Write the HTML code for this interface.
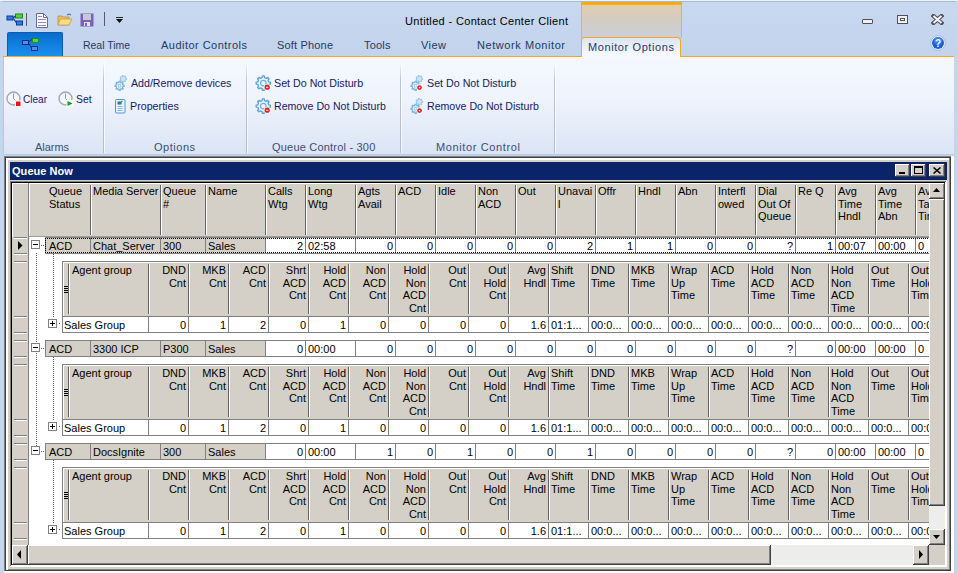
<!DOCTYPE html>
<html><head><meta charset="utf-8"><title>Queue Now</title>
<style>
html,body{margin:0;padding:0}
body{width:958px;height:573px;overflow:hidden;position:relative;font-family:"Liberation Sans",sans-serif;}
.a{position:absolute}
.t{white-space:nowrap}
</style></head><body>
<div class="a" style="left:0px;top:0px;width:958px;height:573px;background:#c4d5ee"></div>
<div class="a" style="left:0px;top:0px;width:958px;height:1px;background:#eef3fb"></div>
<div class="a" style="left:2px;top:1px;width:954px;height:1px;background:#a9bad3"></div>
<div class="a" style="left:0px;top:2px;width:958px;height:54px;background:linear-gradient(#c9d8ef,#c2d3ec)"></div>
<svg class="a" style="left:6px;top:12px" width="18" height="15" viewBox="0 0 18 15">
<rect x="1" y="4" width="6" height="4" fill="#2a7fe0" stroke="#0b3a9a" stroke-width="1"/>
<rect x="9.5" y="2" width="7" height="4" fill="#5ad040" stroke="#1a8a10" stroke-width="1"/>
<rect x="10.5" y="9" width="6" height="4" fill="#2a7fe0" stroke="#0b3a9a" stroke-width="1"/>
<path d="M7 6 L9.5 4 M7.5 6.5 L10.5 11" stroke="#0b3a9a" stroke-width="1.2" fill="none"/>
</svg>
<div class="a" style="left:26px;top:13px;width:1px;height:13px;background:#5a5a6a"></div>
<svg class="a" style="left:35px;top:12px" width="14" height="17" viewBox="0 0 14 17">
<path d="M1.5 1.5 H8.5 L12.5 5.5 V15.5 H1.5 Z" fill="#fff" stroke="#6a6aa0" stroke-width="1"/>
<path d="M8.5 1.5 V5.5 H12.5" fill="none" stroke="#6a6aa0" stroke-width="1"/>
<path d="M3 4.5 H7 M3 7.5 H11 M3 10.5 H11 M3 13.5 H11" stroke="#8c8cc0" stroke-width="1"/>
</svg>
<svg class="a" style="left:57px;top:13px" width="16" height="14" viewBox="0 0 16 14">
<path d="M1 3 H5 L6 4 H12 V12 H1 Z" fill="#e8c060" stroke="#c09030" stroke-width="0.8"/>
<path d="M1 12 L3.5 6 H15 L12 12 Z" fill="#f8dc88" stroke="#c8a040" stroke-width="0.8"/>
<path d="M10 2 Q12 0 14 2" fill="none" stroke="#3060a0" stroke-width="1"/>
</svg>
<svg class="a" style="left:80px;top:13px" width="15" height="15" viewBox="0 0 15 15">
<rect x="0.5" y="0.5" width="13" height="13" fill="#7b62b8"/>
<rect x="3" y="1" width="8" height="6" fill="#c8c8d0"/>
<rect x="4" y="9" width="6" height="4" fill="#e0e0e0"/>
<rect x="5" y="10" width="2" height="3" fill="#7b62b8"/>
</svg>
<div class="a" style="left:104px;top:12px;width:1px;height:14px;background:#5a5a6a"></div>
<div class="a" style="left:116px;top:17px;width:7px;height:1px;background:#222"></div>
<svg class="a" style="left:116px;top:19px" width="8" height="5"><path d="M0 0 H7 L3.5 4 Z" fill="#111"/></svg>
<div class="a t" style="left:405px;top:15px;font-size:11px;line-height:13px;color:#000;letter-spacing:0.348px;">Untitled - Contact Center Client</div>
<div class="a" style="left:862px;top:19px;width:11px;height:5px;background:#f0f0f0;border:1px solid #505058;box-sizing:border-box;border-radius:1px"></div>
<div class="a" style="left:897px;top:15px;width:11px;height:9px;background:#f0f0f0;border:1px solid #505058;box-sizing:border-box"></div>
<div class="a" style="left:900px;top:18px;width:5px;height:3px;background:#fff;border:1px solid #505058;box-sizing:border-box"></div>
<svg class="a" style="left:931px;top:14px" width="13" height="11" viewBox="0 0 13 11">
<path d="M2.5 2 L10.5 9 M10.5 2 L2.5 9" stroke="#505058" stroke-width="4.2" stroke-linecap="square"/>
<path d="M2.5 2 L10.5 9 M10.5 2 L2.5 9" stroke="#f4f4f4" stroke-width="2" stroke-linecap="butt"/>
</svg>
<svg class="a" style="left:930px;top:35px" width="16" height="16" viewBox="0 0 16 16">
<circle cx="8" cy="8" r="7.2" fill="#fff" stroke="#8ab0e8" stroke-width="0.8"/>
<circle cx="8" cy="8" r="6" fill="#1a5fd0"/>
<circle cx="8" cy="6" r="4" fill="#4a90f0" opacity="0.6"/>
<text x="8" y="12" text-anchor="middle" font-family="Liberation Sans" font-weight="bold" font-size="10" fill="#fff">?</text>
</svg>
<div class="a" style="left:7px;top:32px;width:56px;height:24px;background:linear-gradient(#0a6ccc,#1890ee);border:1px solid #0c5cb0;border-bottom:none;box-sizing:border-box;border-radius:2px 2px 0 0"></div>
<svg class="a" style="left:21px;top:37px" width="19" height="15" viewBox="0 0 19 15">
<rect x="1.5" y="3.5" width="6" height="4" fill="#4a90e0" stroke="#0b2a8a" stroke-width="1"/>
<rect x="11.5" y="1.5" width="6" height="4" fill="#60d040" stroke="#1a8a10" stroke-width="0.8"/>
<rect x="10.5" y="9.5" width="6" height="4" fill="#4a90e0" stroke="#0b2a8a" stroke-width="1"/>
<path d="M7.5 5 L11 2.5 M8 6.5 L10.5 11" stroke="#0b2a8a" stroke-width="1" fill="none"/>
</svg>
<div class="a t" style="left:83px;top:39px;font-size:10.44px;line-height:13px;color:#1e3a66;">Real Time</div>
<div class="a t" style="left:161px;top:39px;font-size:11px;line-height:13px;color:#1e3a66;letter-spacing:0.473px;">Auditor Controls</div>
<div class="a t" style="left:277px;top:39px;font-size:11px;line-height:13px;color:#1e3a66;letter-spacing:0.178px;">Soft Phone</div>
<div class="a t" style="left:364px;top:39px;font-size:11px;line-height:13px;color:#1e3a66;letter-spacing:0.200px;">Tools</div>
<div class="a t" style="left:421px;top:39px;font-size:11px;line-height:13px;color:#1e3a66;letter-spacing:0.433px;">View</div>
<div class="a t" style="left:477px;top:39px;font-size:11px;line-height:13px;color:#1e3a66;letter-spacing:0.564px;">Network Monitor</div>
<div class="a" style="left:581px;top:2px;width:101px;height:36px;background:linear-gradient(#e0cfb0,#d4ccc0 50%,#c8d0dc);border-left:1px solid #f0b040;border-right:1px solid #f0b040;box-sizing:border-box"></div>
<div class="a" style="left:581px;top:2px;width:101px;height:3px;background:#fcac10"></div>
<div class="a" style="left:3px;top:56px;width:951px;height:98px;background:linear-gradient(#f5f8fe 0%,#eef3fc 45%,#e2eaf7 80%,#dae4f4 100%);border-left:1px solid #f0c070;box-sizing:border-box"></div>
<div class="a" style="left:3px;top:56px;width:951px;height:1px;background:#f5a623"></div>
<div class="a" style="left:581px;top:37px;width:100px;height:20px;background:linear-gradient(#dde5f1,#f4f7fd 80%,#f5f8fe);border:1px solid #f5a623;border-bottom:none;box-sizing:border-box;border-radius:4px 4px 0 0"></div>
<div class="a t" style="left:588px;top:41px;font-size:11px;line-height:13px;color:#1e3a66;letter-spacing:0.593px;">Monitor Options</div>
<div class="a" style="left:103px;top:62px;width:1px;height:91px;background:linear-gradient(rgba(176,190,214,0),#b8c4d8 20%,#b0bcd4 100%)"></div>
<div class="a" style="left:104px;top:62px;width:1px;height:91px;background:rgba(255,255,255,0.7)"></div>
<div class="a" style="left:246px;top:62px;width:1px;height:91px;background:linear-gradient(rgba(176,190,214,0),#b8c4d8 20%,#b0bcd4 100%)"></div>
<div class="a" style="left:247px;top:62px;width:1px;height:91px;background:rgba(255,255,255,0.7)"></div>
<div class="a" style="left:400px;top:62px;width:1px;height:91px;background:linear-gradient(rgba(176,190,214,0),#b8c4d8 20%,#b0bcd4 100%)"></div>
<div class="a" style="left:401px;top:62px;width:1px;height:91px;background:rgba(255,255,255,0.7)"></div>
<div class="a" style="left:554px;top:62px;width:1px;height:91px;background:linear-gradient(rgba(176,190,214,0),#b8c4d8 20%,#b0bcd4 100%)"></div>
<div class="a" style="left:555px;top:62px;width:1px;height:91px;background:rgba(255,255,255,0.7)"></div>
<svg class="a" style="left:6px;top:91px" width="16" height="16" viewBox="0 0 16 16">
<circle cx="7.5" cy="7.5" r="6.5" fill="#f4f6fa" stroke="#a0a8b4" stroke-width="1.4"/>
<path d="M7.5 2.5 V7.5 L10 10" stroke="#909aa6" stroke-width="1" fill="none"/>
<rect x="9" y="9.5" width="6" height="6" fill="#fff"/><rect x="10" y="10.5" width="4.5" height="4.5" fill="#e8101a"/></svg>
<div class="a t" style="left:23px;top:93px;font-size:10.04px;line-height:13px;color:#161a66;">Clear</div>
<svg class="a" style="left:58px;top:91px" width="16" height="16" viewBox="0 0 16 16">
<circle cx="7.5" cy="7.5" r="6.5" fill="#f4f6fa" stroke="#a0a8b4" stroke-width="1.4"/>
<path d="M7.5 2.5 V7.5 L10 10" stroke="#909aa6" stroke-width="1" fill="none"/>
<rect x="8.5" y="9" width="7" height="7" fill="#fff"/><path d="M9.5 10 L14.5 12.5 L9.5 15 Z" fill="#10a020"/></svg>
<div class="a t" style="left:76px;top:93px;font-size:10.33px;line-height:13px;color:#161a66;">Set</div>
<div class="a t" style="left:35px;top:141px;font-size:10.94px;line-height:13px;color:#3a4e7a;">Alarms</div>
<svg class="a" style="left:113px;top:75px" width="18" height="18" viewBox="0 0 18 18">
<path d="M12.72 3.19 L13.66 3.27 L13.66 4.33 L12.72 4.41 L12.29 5.31 L12.81 6.09 L11.98 6.76 L11.33 6.08 L10.36 6.30 L10.07 7.19 L9.03 6.96 L9.17 6.03 L8.38 5.40 L7.51 5.74 L7.04 4.78 L7.85 4.30 L7.85 3.30 L7.04 2.82 L7.51 1.86 L8.38 2.20 L9.17 1.57 L9.03 0.64 L10.07 0.41 L10.36 1.30 L11.33 1.52 L11.98 0.84 L12.81 1.51 L12.29 2.29 Z" fill="#cfe3f4" stroke="#8cc2e8" stroke-width="1" stroke-linejoin="round"/>
<path d="M9.92 10.07 L11.16 10.17 L11.16 11.43 L9.92 11.53 L9.46 12.63 L10.27 13.58 L9.38 14.47 L8.43 13.66 L7.33 14.12 L7.23 15.36 L5.97 15.36 L5.87 14.12 L4.77 13.66 L3.82 14.47 L2.93 13.58 L3.74 12.63 L3.28 11.53 L2.04 11.43 L2.04 10.17 L3.28 10.07 L3.74 8.97 L2.93 8.02 L3.82 7.13 L4.77 7.94 L5.87 7.48 L5.97 6.24 L7.23 6.24 L7.33 7.48 L8.43 7.94 L9.38 7.13 L10.27 8.02 L9.46 8.97 Z" fill="#e8f1fa" stroke="#74b2e2" stroke-width="1.1" stroke-linejoin="round"/>
<circle cx="6.6" cy="10.8" r="1.5" fill="none" stroke="#8cc2e8" stroke-width="1"/>
</svg>
<div class="a t" style="left:131px;top:77px;font-size:10.63px;line-height:13px;color:#161a66;">Add/Remove devices</div>
<svg class="a" style="left:114px;top:98px" width="12" height="16" viewBox="0 0 12 16">
<rect x="1.5" y="1.5" width="9.5" height="13.5" rx="1" fill="#eaf3fc" stroke="#4a98d8" stroke-width="1"/>
<rect x="3.5" y="3.5" width="4" height="3" fill="#2c6cc0"/><path d="M4.5 4.8 L5.5 5.8 L8.5 2.8" stroke="#20a020" stroke-width="1.1" fill="none"/>
<path d="M3.5 8.5 H8.5 M3.5 10.5 H8.5 M3.5 12.5 H8.5" stroke="#8ab4e0" stroke-width="1"/>
</svg>
<div class="a t" style="left:130px;top:100px;font-size:10.71px;line-height:13px;color:#161a66;">Properties</div>
<div class="a t" style="left:154px;top:141px;font-size:11px;line-height:13px;color:#3a4e7a;letter-spacing:0.517px;">Options</div>
<svg class="a" style="left:255px;top:75px" width="18" height="18" viewBox="0 0 18 18">
<path d="M13.77 6.90 L15.43 7.11 L15.43 9.09 L13.77 9.30 L13.02 11.12 L14.04 12.45 L12.65 13.84 L11.32 12.82 L9.50 13.57 L9.29 15.23 L7.31 15.23 L7.10 13.57 L5.28 12.82 L3.95 13.84 L2.56 12.45 L3.58 11.12 L2.83 9.30 L1.17 9.09 L1.17 7.11 L2.83 6.90 L3.58 5.08 L2.56 3.75 L3.95 2.36 L5.28 3.38 L7.10 2.63 L7.31 0.97 L9.29 0.97 L9.50 2.63 L11.32 3.38 L12.65 2.36 L14.04 3.75 L13.02 5.08 Z" fill="#eaf3fb" stroke="#5aa2dc" stroke-width="1.3" stroke-linejoin="round"/>
<circle cx="8.3" cy="8.1" r="2.8" fill="none" stroke="#6aaee0" stroke-width="1.2"/>
<circle cx="12.2" cy="12.2" r="3.3" fill="#fff"/><circle cx="12.2" cy="12.2" r="2.6" fill="#ec1c24"/><rect x="11" y="11.8" width="2.4" height="0.9" fill="#fff"/>
</svg>
<div class="a t" style="left:274px;top:77px;font-size:10.7px;line-height:13px;color:#161a66;">Set Do Not Disturb</div>
<svg class="a" style="left:255px;top:98px" width="18" height="18" viewBox="0 0 18 18">
<path d="M13.77 6.90 L15.43 7.11 L15.43 9.09 L13.77 9.30 L13.02 11.12 L14.04 12.45 L12.65 13.84 L11.32 12.82 L9.50 13.57 L9.29 15.23 L7.31 15.23 L7.10 13.57 L5.28 12.82 L3.95 13.84 L2.56 12.45 L3.58 11.12 L2.83 9.30 L1.17 9.09 L1.17 7.11 L2.83 6.90 L3.58 5.08 L2.56 3.75 L3.95 2.36 L5.28 3.38 L7.10 2.63 L7.31 0.97 L9.29 0.97 L9.50 2.63 L11.32 3.38 L12.65 2.36 L14.04 3.75 L13.02 5.08 Z" fill="#eaf3fb" stroke="#5aa2dc" stroke-width="1.3" stroke-linejoin="round"/>
<circle cx="8.3" cy="8.1" r="2.8" fill="none" stroke="#6aaee0" stroke-width="1.2"/>
<circle cx="12.2" cy="12.2" r="3.3" fill="#fff"/><circle cx="12.2" cy="12.2" r="2.6" fill="#ec1c24"/><rect x="11" y="11.8" width="2.4" height="0.9" fill="#fff"/>
</svg>
<div class="a t" style="left:274px;top:100px;font-size:10.6px;line-height:13px;color:#161a66;">Remove Do Not Disturb</div>
<div class="a t" style="left:272px;top:141px;font-size:11px;line-height:13px;color:#3a4e7a;letter-spacing:0.200px;">Queue Control - 300</div>
<svg class="a" style="left:409px;top:75px" width="18" height="18" viewBox="0 0 18 18">
<path d="M12.72 3.19 L13.66 3.27 L13.66 4.33 L12.72 4.41 L12.29 5.31 L12.81 6.09 L11.98 6.76 L11.33 6.08 L10.36 6.30 L10.07 7.19 L9.03 6.96 L9.17 6.03 L8.38 5.40 L7.51 5.74 L7.04 4.78 L7.85 4.30 L7.85 3.30 L7.04 2.82 L7.51 1.86 L8.38 2.20 L9.17 1.57 L9.03 0.64 L10.07 0.41 L10.36 1.30 L11.33 1.52 L11.98 0.84 L12.81 1.51 L12.29 2.29 Z" fill="#cfe3f4" stroke="#8cc2e8" stroke-width="1" stroke-linejoin="round"/>
<path d="M9.92 10.07 L11.16 10.17 L11.16 11.43 L9.92 11.53 L9.46 12.63 L10.27 13.58 L9.38 14.47 L8.43 13.66 L7.33 14.12 L7.23 15.36 L5.97 15.36 L5.87 14.12 L4.77 13.66 L3.82 14.47 L2.93 13.58 L3.74 12.63 L3.28 11.53 L2.04 11.43 L2.04 10.17 L3.28 10.07 L3.74 8.97 L2.93 8.02 L3.82 7.13 L4.77 7.94 L5.87 7.48 L5.97 6.24 L7.23 6.24 L7.33 7.48 L8.43 7.94 L9.38 7.13 L10.27 8.02 L9.46 8.97 Z" fill="#e8f1fa" stroke="#74b2e2" stroke-width="1.1" stroke-linejoin="round"/>
<circle cx="6.6" cy="10.8" r="1.5" fill="none" stroke="#8cc2e8" stroke-width="1"/>
<circle cx="10.5" cy="12.6" r="3" fill="#fff"/><circle cx="10.5" cy="12.6" r="2.4" fill="#ec1c24"/><circle cx="10.5" cy="12.6" r="0.8" fill="#fff"/></svg>
<div class="a t" style="left:427px;top:77px;font-size:10.7px;line-height:13px;color:#161a66;">Set Do Not Disturb</div>
<svg class="a" style="left:409px;top:98px" width="18" height="18" viewBox="0 0 18 18">
<path d="M12.72 3.19 L13.66 3.27 L13.66 4.33 L12.72 4.41 L12.29 5.31 L12.81 6.09 L11.98 6.76 L11.33 6.08 L10.36 6.30 L10.07 7.19 L9.03 6.96 L9.17 6.03 L8.38 5.40 L7.51 5.74 L7.04 4.78 L7.85 4.30 L7.85 3.30 L7.04 2.82 L7.51 1.86 L8.38 2.20 L9.17 1.57 L9.03 0.64 L10.07 0.41 L10.36 1.30 L11.33 1.52 L11.98 0.84 L12.81 1.51 L12.29 2.29 Z" fill="#cfe3f4" stroke="#8cc2e8" stroke-width="1" stroke-linejoin="round"/>
<path d="M9.92 10.07 L11.16 10.17 L11.16 11.43 L9.92 11.53 L9.46 12.63 L10.27 13.58 L9.38 14.47 L8.43 13.66 L7.33 14.12 L7.23 15.36 L5.97 15.36 L5.87 14.12 L4.77 13.66 L3.82 14.47 L2.93 13.58 L3.74 12.63 L3.28 11.53 L2.04 11.43 L2.04 10.17 L3.28 10.07 L3.74 8.97 L2.93 8.02 L3.82 7.13 L4.77 7.94 L5.87 7.48 L5.97 6.24 L7.23 6.24 L7.33 7.48 L8.43 7.94 L9.38 7.13 L10.27 8.02 L9.46 8.97 Z" fill="#e8f1fa" stroke="#74b2e2" stroke-width="1.1" stroke-linejoin="round"/>
<circle cx="6.6" cy="10.8" r="1.5" fill="none" stroke="#8cc2e8" stroke-width="1"/>
<circle cx="10.5" cy="12.6" r="3" fill="#fff"/><circle cx="10.5" cy="12.6" r="2.4" fill="#ec1c24"/><circle cx="10.5" cy="12.6" r="0.8" fill="#fff"/></svg>
<div class="a t" style="left:427px;top:100px;font-size:10.6px;line-height:13px;color:#161a66;">Remove Do Not Disturb</div>
<div class="a t" style="left:436px;top:141px;font-size:11px;line-height:13px;color:#3a4e7a;letter-spacing:0.629px;">Monitor Control</div>
<div class="a" style="left:3px;top:154px;width:951px;height:2px;background:linear-gradient(#b8c8e0,#c4d5ee)"></div>
<div class="a" style="left:4px;top:156px;width:950px;height:417px;background:#d4d0c8"></div>
<div class="a" style="left:4px;top:156px;width:950px;height:1px;background:#808080"></div>
<div class="a" style="left:4px;top:156px;width:1px;height:417px;background:#808080"></div>
<div class="a" style="left:5px;top:157px;width:946px;height:1px;background:#404040"></div>
<div class="a" style="left:5px;top:157px;width:1px;height:416px;background:#404040"></div>
<div class="a" style="left:6px;top:158px;width:943px;height:2px;background:#fff"></div>
<div class="a" style="left:6px;top:158px;width:2px;height:413px;background:#fff"></div>
<div class="a" style="left:949px;top:158px;width:1px;height:412px;background:#808080"></div>
<div class="a" style="left:8px;top:569px;width:942px;height:1px;background:#808080"></div>
<div class="a" style="left:950px;top:157px;width:1px;height:414px;background:#404040"></div>
<div class="a" style="left:6px;top:570px;width:945px;height:1px;background:#404040"></div>
<div class="a" style="left:951px;top:156px;width:3px;height:417px;background:#fff"></div>
<div class="a" style="left:4px;top:571px;width:950px;height:2px;background:#fff"></div>
<div class="a" style="left:10px;top:162px;width:937px;height:18px;background:#0a246a"></div>
<div class="a t" style="left:12px;top:165px;font-size:11px;line-height:13px;color:#fff;letter-spacing:0.05px"><b>Queue Now</b></div>
<div class="a" style="left:895px;top:164px;width:15px;height:13px;background:#d4d0c8;box-shadow:inset -1px -1px #404040, inset 1px 1px #fff, inset -2px -2px #808080"><div class="a" style="left:4px;top:8px;width:6px;height:2px;background:#000"></div></div>
<div class="a" style="left:911px;top:164px;width:15px;height:13px;background:#d4d0c8;box-shadow:inset -1px -1px #404040, inset 1px 1px #fff, inset -2px -2px #808080"><div class="a" style="left:3px;top:2px;width:9px;height:8px;border:1px solid #000;border-top-width:2px;box-sizing:border-box"></div></div>
<div class="a" style="left:929px;top:164px;width:16px;height:13px;background:#d4d0c8;box-shadow:inset -1px -1px #404040, inset 1px 1px #fff, inset -2px -2px #808080"><svg class="a" style="left:4px;top:3px" width="8" height="7"><path d="M0.5 0.5 L7.5 6.5 M7.5 0.5 L0.5 6.5" stroke="#000" stroke-width="1.5"/></svg></div>
<div class="a" style="left:10px;top:181px;width:937px;height:386px;background:#fff"></div>
<div class="a" style="left:10px;top:181px;width:936px;height:1px;background:#808080"></div>
<div class="a" style="left:10px;top:181px;width:1px;height:385px;background:#808080"></div>
<div class="a" style="left:11px;top:182px;width:934px;height:1px;background:#000"></div>
<div class="a" style="left:11px;top:182px;width:1px;height:383px;background:#000"></div>
<div class="a" style="left:945px;top:182px;width:2px;height:385px;background:#fff"></div>
<div class="a" style="left:11px;top:565px;width:936px;height:2px;background:#fff"></div>
<div class="a" style="left:12px;top:183px;width:917px;height:362px;overflow:hidden;background:#fff">
<div class="a" style="left:0px;top:0px;width:16px;height:362px;background:#d4d0c8"></div>
<div class="a" style="left:16px;top:0px;width:1px;height:362px;background:#808080"></div>
<div class="a" style="left:17px;top:0px;width:1px;height:54px;background:#fff"></div>
<div class="a" style="left:0px;top:0px;width:16px;height:1px;background:#fff"></div>
<div class="a" style="left:0px;top:0px;width:1px;height:54px;background:#fff"></div>
<div class="a" style="left:18px;top:0px;width:900px;height:54px;background:#d4d0c8"></div>
<div class="a" style="left:18px;top:0px;width:900px;height:1px;background:#fff"></div>
<div class="a" style="left:17px;top:53px;width:901px;height:1px;background:#a0a0a0"></div>
<div class="a t" style="left:37px;top:2px;font-size:11px;line-height:12.7px;color:#000;">Queue<br>Status</div>
<div class="a" style="left:78px;top:2px;width:1px;height:50px;background:#646464"></div>
<div class="a" style="left:79px;top:2px;width:1px;height:50px;background:#fff"></div>
<div class="a t" style="left:81px;top:2px;font-size:11px;line-height:12.7px;color:#000;">Media Server</div>
<div class="a" style="left:148px;top:2px;width:1px;height:50px;background:#646464"></div>
<div class="a" style="left:149px;top:2px;width:1px;height:50px;background:#fff"></div>
<div class="a t" style="left:151px;top:2px;font-size:11px;line-height:12.7px;color:#000;">Queue<br>#</div>
<div class="a" style="left:193px;top:2px;width:1px;height:50px;background:#646464"></div>
<div class="a" style="left:194px;top:2px;width:1px;height:50px;background:#fff"></div>
<div class="a t" style="left:196px;top:2px;font-size:11px;line-height:12.7px;color:#000;">Name</div>
<div class="a" style="left:253px;top:2px;width:1px;height:50px;background:#646464"></div>
<div class="a" style="left:254px;top:2px;width:1px;height:50px;background:#fff"></div>
<div class="a t" style="left:256px;top:2px;font-size:11px;line-height:12.7px;color:#000;">Calls<br>Wtg</div>
<div class="a" style="left:293px;top:2px;width:1px;height:50px;background:#646464"></div>
<div class="a" style="left:294px;top:2px;width:1px;height:50px;background:#fff"></div>
<div class="a t" style="left:296px;top:2px;font-size:11px;line-height:12.7px;color:#000;">Long<br>Wtg</div>
<div class="a" style="left:343px;top:2px;width:1px;height:50px;background:#646464"></div>
<div class="a" style="left:344px;top:2px;width:1px;height:50px;background:#fff"></div>
<div class="a t" style="left:346px;top:2px;font-size:11px;line-height:12.7px;color:#000;">Agts<br>Avail</div>
<div class="a" style="left:383px;top:2px;width:1px;height:50px;background:#646464"></div>
<div class="a" style="left:384px;top:2px;width:1px;height:50px;background:#fff"></div>
<div class="a t" style="left:386px;top:2px;font-size:11px;line-height:12.7px;color:#000;">ACD</div>
<div class="a" style="left:423px;top:2px;width:1px;height:50px;background:#646464"></div>
<div class="a" style="left:424px;top:2px;width:1px;height:50px;background:#fff"></div>
<div class="a t" style="left:426px;top:2px;font-size:11px;line-height:12.7px;color:#000;">Idle</div>
<div class="a" style="left:463px;top:2px;width:1px;height:50px;background:#646464"></div>
<div class="a" style="left:464px;top:2px;width:1px;height:50px;background:#fff"></div>
<div class="a t" style="left:466px;top:2px;font-size:11px;line-height:12.7px;color:#000;">Non<br>ACD</div>
<div class="a" style="left:503px;top:2px;width:1px;height:50px;background:#646464"></div>
<div class="a" style="left:504px;top:2px;width:1px;height:50px;background:#fff"></div>
<div class="a t" style="left:506px;top:2px;font-size:11px;line-height:12.7px;color:#000;">Out</div>
<div class="a" style="left:543px;top:2px;width:1px;height:50px;background:#646464"></div>
<div class="a" style="left:544px;top:2px;width:1px;height:50px;background:#fff"></div>
<div class="a t" style="left:546px;top:2px;font-size:11px;line-height:12.7px;color:#000;">Unavai<br>l</div>
<div class="a" style="left:583px;top:2px;width:1px;height:50px;background:#646464"></div>
<div class="a" style="left:584px;top:2px;width:1px;height:50px;background:#fff"></div>
<div class="a t" style="left:586px;top:2px;font-size:11px;line-height:12.7px;color:#000;">Offr</div>
<div class="a" style="left:623px;top:2px;width:1px;height:50px;background:#646464"></div>
<div class="a" style="left:624px;top:2px;width:1px;height:50px;background:#fff"></div>
<div class="a t" style="left:626px;top:2px;font-size:11px;line-height:12.7px;color:#000;">Hndl</div>
<div class="a" style="left:663px;top:2px;width:1px;height:50px;background:#646464"></div>
<div class="a" style="left:664px;top:2px;width:1px;height:50px;background:#fff"></div>
<div class="a t" style="left:666px;top:2px;font-size:11px;line-height:12.7px;color:#000;">Abn</div>
<div class="a" style="left:703px;top:2px;width:1px;height:50px;background:#646464"></div>
<div class="a" style="left:704px;top:2px;width:1px;height:50px;background:#fff"></div>
<div class="a t" style="left:706px;top:2px;font-size:11px;line-height:12.7px;color:#000;">Interfl<br>owed</div>
<div class="a" style="left:743px;top:2px;width:1px;height:50px;background:#646464"></div>
<div class="a" style="left:744px;top:2px;width:1px;height:50px;background:#fff"></div>
<div class="a t" style="left:746px;top:2px;font-size:11px;line-height:12.7px;color:#000;">Dial<br>Out Of<br>Queue</div>
<div class="a" style="left:783px;top:2px;width:1px;height:50px;background:#646464"></div>
<div class="a" style="left:784px;top:2px;width:1px;height:50px;background:#fff"></div>
<div class="a t" style="left:786px;top:2px;font-size:11px;line-height:12.7px;color:#000;">Re Q</div>
<div class="a" style="left:823px;top:2px;width:1px;height:50px;background:#646464"></div>
<div class="a" style="left:824px;top:2px;width:1px;height:50px;background:#fff"></div>
<div class="a t" style="left:826px;top:2px;font-size:11px;line-height:12.7px;color:#000;">Avg<br>Time<br>Hndl</div>
<div class="a" style="left:863px;top:2px;width:1px;height:50px;background:#646464"></div>
<div class="a" style="left:864px;top:2px;width:1px;height:50px;background:#fff"></div>
<div class="a t" style="left:866px;top:2px;font-size:11px;line-height:12.7px;color:#000;">Avg<br>Time<br>Abn</div>
<div class="a" style="left:903px;top:2px;width:1px;height:50px;background:#646464"></div>
<div class="a" style="left:904px;top:2px;width:1px;height:50px;background:#fff"></div>
<div class="a t" style="left:906px;top:2px;font-size:11px;line-height:12.7px;color:#000;">Avg<br>Talk<br>Time</div>
<div class="a" style="left:24px;top:70px;width:1px;height:193px;background:repeating-linear-gradient(180deg,#606060 0 1px,transparent 1px 2px)"></div>
<div class="a" style="left:2px;top:54px;width:13px;height:1px;background:#808080"></div>
<div class="a" style="left:2px;top:55px;width:13px;height:1px;background:#fff"></div>
<div class="a" style="left:2px;top:70px;width:13px;height:1px;background:#808080"></div>
<div class="a" style="left:2px;top:71px;width:13px;height:1px;background:#fff"></div>
<div class="a" style="left:2px;top:78px;width:13px;height:1px;background:#808080"></div>
<div class="a" style="left:2px;top:79px;width:13px;height:1px;background:#fff"></div>
<div class="a" style="left:2px;top:133px;width:13px;height:1px;background:#808080"></div>
<div class="a" style="left:2px;top:134px;width:13px;height:1px;background:#fff"></div>
<div class="a" style="left:2px;top:149px;width:13px;height:1px;background:#808080"></div>
<div class="a" style="left:2px;top:150px;width:13px;height:1px;background:#fff"></div>
<svg class="a" style="left:6px;top:58px" width="5" height="9"><path d="M0 0 L4.5 4.5 L0 9 Z" fill="#000"/></svg>
<div class="a" style="left:19px;top:57px;width:9px;height:9px;background:#fff;border:1px solid #808080;box-sizing:border-box"></div>
<div class="a" style="left:21px;top:61px;width:5px;height:1px;background:#000"></div>
<div class="a" style="left:29px;top:62px;width:4px;height:1px;background:repeating-linear-gradient(90deg,#606060 0 1px,transparent 1px 2px)"></div>
<div class="a" style="left:36px;top:136px;width:9px;height:9px;background:#fff;border:1px solid #808080;box-sizing:border-box"></div>
<div class="a" style="left:38px;top:140px;width:5px;height:1px;background:#000"></div>
<div class="a" style="left:40px;top:138px;width:1px;height:5px;background:#000"></div>
<div class="a" style="left:47px;top:140px;width:1px;height:1px;background:#606060"></div>
<div class="a" style="left:41px;top:71px;width:1px;height:64px;background:repeating-linear-gradient(180deg,#606060 0 1px,transparent 1px 2px)"></div>
<div class="a" style="left:33px;top:54px;width:885px;height:17px;background:#fff"></div>
<div class="a" style="left:33px;top:54px;width:885px;height:1px;background:#808080"></div>
<div class="a" style="left:33px;top:70px;width:885px;height:1px;background:#808080"></div>
<div class="a" style="left:33px;top:54px;width:1px;height:17px;background:#808080"></div>
<div class="a" style="left:34px;top:55px;width:44px;height:15px;background:#d4d0c8"></div>
<div class="a t" style="left:37px;top:57px;font-size:11px;line-height:13px;color:#000;">ACD</div>
<div class="a" style="left:79px;top:55px;width:69px;height:15px;background:#d4d0c8"></div>
<div class="a" style="left:78px;top:54px;width:1px;height:17px;background:#808080"></div>
<div class="a t" style="left:81px;top:57px;font-size:11px;line-height:13px;color:#000;">Chat_Server</div>
<div class="a" style="left:149px;top:55px;width:44px;height:15px;background:#d4d0c8"></div>
<div class="a" style="left:148px;top:54px;width:1px;height:17px;background:#808080"></div>
<div class="a t" style="left:151px;top:57px;font-size:11px;line-height:13px;color:#000;">300</div>
<div class="a" style="left:194px;top:55px;width:60px;height:15px;background:#d4d0c8"></div>
<div class="a" style="left:193px;top:54px;width:1px;height:17px;background:#808080"></div>
<div class="a t" style="left:196px;top:57px;font-size:11px;line-height:13px;color:#000;">Sales</div>
<div class="a" style="left:253px;top:54px;width:1px;height:17px;background:#808080"></div>
<div class="a t" style="left:171px;width:120px;text-align:right;top:57px;font-size:11px;line-height:13px;color:#000;">2</div>
<div class="a" style="left:293px;top:54px;width:1px;height:17px;background:#808080"></div>
<div class="a t" style="left:296px;top:57px;font-size:11px;line-height:13px;color:#000;">02:58</div>
<div class="a" style="left:343px;top:54px;width:1px;height:17px;background:#808080"></div>
<div class="a t" style="left:261px;width:120px;text-align:right;top:57px;font-size:11px;line-height:13px;color:#000;">0</div>
<div class="a" style="left:383px;top:54px;width:1px;height:17px;background:#808080"></div>
<div class="a t" style="left:301px;width:120px;text-align:right;top:57px;font-size:11px;line-height:13px;color:#000;">0</div>
<div class="a" style="left:423px;top:54px;width:1px;height:17px;background:#808080"></div>
<div class="a t" style="left:341px;width:120px;text-align:right;top:57px;font-size:11px;line-height:13px;color:#000;">0</div>
<div class="a" style="left:463px;top:54px;width:1px;height:17px;background:#808080"></div>
<div class="a t" style="left:381px;width:120px;text-align:right;top:57px;font-size:11px;line-height:13px;color:#000;">0</div>
<div class="a" style="left:503px;top:54px;width:1px;height:17px;background:#808080"></div>
<div class="a t" style="left:421px;width:120px;text-align:right;top:57px;font-size:11px;line-height:13px;color:#000;">0</div>
<div class="a" style="left:543px;top:54px;width:1px;height:17px;background:#808080"></div>
<div class="a t" style="left:461px;width:120px;text-align:right;top:57px;font-size:11px;line-height:13px;color:#000;">2</div>
<div class="a" style="left:583px;top:54px;width:1px;height:17px;background:#808080"></div>
<div class="a t" style="left:501px;width:120px;text-align:right;top:57px;font-size:11px;line-height:13px;color:#000;">1</div>
<div class="a" style="left:623px;top:54px;width:1px;height:17px;background:#808080"></div>
<div class="a t" style="left:541px;width:120px;text-align:right;top:57px;font-size:11px;line-height:13px;color:#000;">1</div>
<div class="a" style="left:663px;top:54px;width:1px;height:17px;background:#808080"></div>
<div class="a t" style="left:581px;width:120px;text-align:right;top:57px;font-size:11px;line-height:13px;color:#000;">0</div>
<div class="a" style="left:703px;top:54px;width:1px;height:17px;background:#808080"></div>
<div class="a t" style="left:621px;width:120px;text-align:right;top:57px;font-size:11px;line-height:13px;color:#000;">0</div>
<div class="a" style="left:743px;top:54px;width:1px;height:17px;background:#808080"></div>
<div class="a t" style="left:661px;width:120px;text-align:right;top:57px;font-size:11px;line-height:13px;color:#000;">?</div>
<div class="a" style="left:783px;top:54px;width:1px;height:17px;background:#808080"></div>
<div class="a t" style="left:701px;width:120px;text-align:right;top:57px;font-size:11px;line-height:13px;color:#000;">1</div>
<div class="a" style="left:823px;top:54px;width:1px;height:17px;background:#808080"></div>
<div class="a t" style="left:826px;top:57px;font-size:11px;line-height:13px;color:#000;">00:07</div>
<div class="a" style="left:863px;top:54px;width:1px;height:17px;background:#808080"></div>
<div class="a t" style="left:866px;top:57px;font-size:11px;line-height:13px;color:#000;">00:00</div>
<div class="a" style="left:903px;top:54px;width:1px;height:17px;background:#808080"></div>
<div class="a t" style="left:906px;top:57px;font-size:11px;line-height:13px;color:#000;">0</div>
<div class="a" style="left:33px;top:55px;width:885px;height:1px;background:repeating-linear-gradient(90deg,#000 0 1px,transparent 1px 2px)"></div>
<div class="a" style="left:33px;top:69px;width:885px;height:1px;background:repeating-linear-gradient(90deg,#000 0 1px,transparent 1px 2px)"></div>
<div class="a" style="left:33px;top:55px;width:1px;height:15px;background:repeating-linear-gradient(180deg,#000 0 1px,transparent 1px 2px)"></div>
<div class="a" style="left:50px;top:78px;width:870px;height:72px;background:#fff"></div>
<div class="a" style="left:50px;top:78px;width:870px;height:55px;background:#d4d0c8"></div>
<div class="a" style="left:50px;top:78px;width:870px;height:1px;background:#808080"></div>
<div class="a" style="left:50px;top:78px;width:1px;height:72px;background:#808080"></div>
<div class="a" style="left:51px;top:79px;width:868px;height:1px;background:#fff"></div>
<div class="a" style="left:51px;top:79px;width:1px;height:54px;background:#fff"></div>
<div class="a" style="left:50px;top:133px;width:870px;height:1px;background:#808080"></div>
<div class="a" style="left:50px;top:149px;width:870px;height:1px;background:#808080"></div>
<div class="a" style="left:52px;top:103px;width:4px;height:1px;background:#000"></div>
<div class="a" style="left:52px;top:105px;width:4px;height:1px;background:#000"></div>
<div class="a" style="left:52px;top:107px;width:4px;height:1px;background:#000"></div>
<div class="a" style="left:52px;top:109px;width:4px;height:1px;background:#000"></div>
<div class="a" style="left:56px;top:81px;width:1px;height:50px;background:#646464"></div>
<div class="a" style="left:57px;top:81px;width:1px;height:50px;background:#fff"></div>
<div class="a t" style="left:60px;top:81px;font-size:11px;line-height:12.7px;color:#000;">Agent group</div>
<div class="a t" style="left:52px;top:136px;font-size:11px;line-height:13px;color:#000;">Sales Group</div>
<div class="a" style="left:136px;top:81px;width:1px;height:50px;background:#646464"></div>
<div class="a" style="left:137px;top:81px;width:1px;height:50px;background:#fff"></div>
<div class="a" style="left:136px;top:133px;width:1px;height:17px;background:#808080"></div>
<div class="a t" style="left:54px;width:120px;text-align:right;top:81px;font-size:11px;line-height:12.7px;color:#000;">DND<br>Cnt</div>
<div class="a t" style="left:54px;width:120px;text-align:right;top:136px;font-size:11px;line-height:13px;color:#000;">0</div>
<div class="a" style="left:176px;top:81px;width:1px;height:50px;background:#646464"></div>
<div class="a" style="left:177px;top:81px;width:1px;height:50px;background:#fff"></div>
<div class="a" style="left:176px;top:133px;width:1px;height:17px;background:#808080"></div>
<div class="a t" style="left:94px;width:120px;text-align:right;top:81px;font-size:11px;line-height:12.7px;color:#000;">MKB<br>Cnt</div>
<div class="a t" style="left:94px;width:120px;text-align:right;top:136px;font-size:11px;line-height:13px;color:#000;">1</div>
<div class="a" style="left:216px;top:81px;width:1px;height:50px;background:#646464"></div>
<div class="a" style="left:217px;top:81px;width:1px;height:50px;background:#fff"></div>
<div class="a" style="left:216px;top:133px;width:1px;height:17px;background:#808080"></div>
<div class="a t" style="left:134px;width:120px;text-align:right;top:81px;font-size:11px;line-height:12.7px;color:#000;">ACD<br>Cnt</div>
<div class="a t" style="left:134px;width:120px;text-align:right;top:136px;font-size:11px;line-height:13px;color:#000;">2</div>
<div class="a" style="left:256px;top:81px;width:1px;height:50px;background:#646464"></div>
<div class="a" style="left:257px;top:81px;width:1px;height:50px;background:#fff"></div>
<div class="a" style="left:256px;top:133px;width:1px;height:17px;background:#808080"></div>
<div class="a t" style="left:174px;width:120px;text-align:right;top:81px;font-size:11px;line-height:12.7px;color:#000;">Shrt<br>ACD<br>Cnt</div>
<div class="a t" style="left:174px;width:120px;text-align:right;top:136px;font-size:11px;line-height:13px;color:#000;">0</div>
<div class="a" style="left:296px;top:81px;width:1px;height:50px;background:#646464"></div>
<div class="a" style="left:297px;top:81px;width:1px;height:50px;background:#fff"></div>
<div class="a" style="left:296px;top:133px;width:1px;height:17px;background:#808080"></div>
<div class="a t" style="left:214px;width:120px;text-align:right;top:81px;font-size:11px;line-height:12.7px;color:#000;">Hold<br>ACD<br>Cnt</div>
<div class="a t" style="left:214px;width:120px;text-align:right;top:136px;font-size:11px;line-height:13px;color:#000;">1</div>
<div class="a" style="left:336px;top:81px;width:1px;height:50px;background:#646464"></div>
<div class="a" style="left:337px;top:81px;width:1px;height:50px;background:#fff"></div>
<div class="a" style="left:336px;top:133px;width:1px;height:17px;background:#808080"></div>
<div class="a t" style="left:254px;width:120px;text-align:right;top:81px;font-size:11px;line-height:12.7px;color:#000;">Non<br>ACD<br>Cnt</div>
<div class="a t" style="left:254px;width:120px;text-align:right;top:136px;font-size:11px;line-height:13px;color:#000;">0</div>
<div class="a" style="left:376px;top:81px;width:1px;height:50px;background:#646464"></div>
<div class="a" style="left:377px;top:81px;width:1px;height:50px;background:#fff"></div>
<div class="a" style="left:376px;top:133px;width:1px;height:17px;background:#808080"></div>
<div class="a t" style="left:294px;width:120px;text-align:right;top:81px;font-size:11px;line-height:12.7px;color:#000;">Hold<br>Non<br>ACD<br>Cnt</div>
<div class="a t" style="left:294px;width:120px;text-align:right;top:136px;font-size:11px;line-height:13px;color:#000;">0</div>
<div class="a" style="left:416px;top:81px;width:1px;height:50px;background:#646464"></div>
<div class="a" style="left:417px;top:81px;width:1px;height:50px;background:#fff"></div>
<div class="a" style="left:416px;top:133px;width:1px;height:17px;background:#808080"></div>
<div class="a t" style="left:334px;width:120px;text-align:right;top:81px;font-size:11px;line-height:12.7px;color:#000;">Out<br>Cnt</div>
<div class="a t" style="left:334px;width:120px;text-align:right;top:136px;font-size:11px;line-height:13px;color:#000;">0</div>
<div class="a" style="left:456px;top:81px;width:1px;height:50px;background:#646464"></div>
<div class="a" style="left:457px;top:81px;width:1px;height:50px;background:#fff"></div>
<div class="a" style="left:456px;top:133px;width:1px;height:17px;background:#808080"></div>
<div class="a t" style="left:374px;width:120px;text-align:right;top:81px;font-size:11px;line-height:12.7px;color:#000;">Out<br>Hold<br>Cnt</div>
<div class="a t" style="left:374px;width:120px;text-align:right;top:136px;font-size:11px;line-height:13px;color:#000;">0</div>
<div class="a" style="left:496px;top:81px;width:1px;height:50px;background:#646464"></div>
<div class="a" style="left:497px;top:81px;width:1px;height:50px;background:#fff"></div>
<div class="a" style="left:496px;top:133px;width:1px;height:17px;background:#808080"></div>
<div class="a t" style="left:414px;width:120px;text-align:right;top:81px;font-size:11px;line-height:12.7px;color:#000;">Avg<br>Hndl</div>
<div class="a t" style="left:414px;width:120px;text-align:right;top:136px;font-size:11px;line-height:13px;color:#000;">1.6</div>
<div class="a" style="left:536px;top:81px;width:1px;height:50px;background:#646464"></div>
<div class="a" style="left:537px;top:81px;width:1px;height:50px;background:#fff"></div>
<div class="a" style="left:536px;top:133px;width:1px;height:17px;background:#808080"></div>
<div class="a t" style="left:539px;top:81px;font-size:11px;line-height:12.7px;color:#000;">Shift<br>Time</div>
<div class="a t" style="left:539px;top:136px;font-size:11px;line-height:13px;color:#000;">01:1...</div>
<div class="a" style="left:576px;top:81px;width:1px;height:50px;background:#646464"></div>
<div class="a" style="left:577px;top:81px;width:1px;height:50px;background:#fff"></div>
<div class="a" style="left:576px;top:133px;width:1px;height:17px;background:#808080"></div>
<div class="a t" style="left:579px;top:81px;font-size:11px;line-height:12.7px;color:#000;">DND<br>Time</div>
<div class="a t" style="left:579px;top:136px;font-size:11px;line-height:13px;color:#000;">00:0...</div>
<div class="a" style="left:616px;top:81px;width:1px;height:50px;background:#646464"></div>
<div class="a" style="left:617px;top:81px;width:1px;height:50px;background:#fff"></div>
<div class="a" style="left:616px;top:133px;width:1px;height:17px;background:#808080"></div>
<div class="a t" style="left:619px;top:81px;font-size:11px;line-height:12.7px;color:#000;">MKB<br>Time</div>
<div class="a t" style="left:619px;top:136px;font-size:11px;line-height:13px;color:#000;">00:0...</div>
<div class="a" style="left:656px;top:81px;width:1px;height:50px;background:#646464"></div>
<div class="a" style="left:657px;top:81px;width:1px;height:50px;background:#fff"></div>
<div class="a" style="left:656px;top:133px;width:1px;height:17px;background:#808080"></div>
<div class="a t" style="left:659px;top:81px;font-size:11px;line-height:12.7px;color:#000;">Wrap<br>Up<br>Time</div>
<div class="a t" style="left:659px;top:136px;font-size:11px;line-height:13px;color:#000;">00:0...</div>
<div class="a" style="left:696px;top:81px;width:1px;height:50px;background:#646464"></div>
<div class="a" style="left:697px;top:81px;width:1px;height:50px;background:#fff"></div>
<div class="a" style="left:696px;top:133px;width:1px;height:17px;background:#808080"></div>
<div class="a t" style="left:699px;top:81px;font-size:11px;line-height:12.7px;color:#000;">ACD<br>Time</div>
<div class="a t" style="left:699px;top:136px;font-size:11px;line-height:13px;color:#000;">00:0...</div>
<div class="a" style="left:736px;top:81px;width:1px;height:50px;background:#646464"></div>
<div class="a" style="left:737px;top:81px;width:1px;height:50px;background:#fff"></div>
<div class="a" style="left:736px;top:133px;width:1px;height:17px;background:#808080"></div>
<div class="a t" style="left:739px;top:81px;font-size:11px;line-height:12.7px;color:#000;">Hold<br>ACD<br>Time</div>
<div class="a t" style="left:739px;top:136px;font-size:11px;line-height:13px;color:#000;">00:0...</div>
<div class="a" style="left:776px;top:81px;width:1px;height:50px;background:#646464"></div>
<div class="a" style="left:777px;top:81px;width:1px;height:50px;background:#fff"></div>
<div class="a" style="left:776px;top:133px;width:1px;height:17px;background:#808080"></div>
<div class="a t" style="left:779px;top:81px;font-size:11px;line-height:12.7px;color:#000;">Non<br>ACD<br>Time</div>
<div class="a t" style="left:779px;top:136px;font-size:11px;line-height:13px;color:#000;">00:0...</div>
<div class="a" style="left:816px;top:81px;width:1px;height:50px;background:#646464"></div>
<div class="a" style="left:817px;top:81px;width:1px;height:50px;background:#fff"></div>
<div class="a" style="left:816px;top:133px;width:1px;height:17px;background:#808080"></div>
<div class="a t" style="left:819px;top:81px;font-size:11px;line-height:12.7px;color:#000;">Hold<br>Non<br>ACD<br>Time</div>
<div class="a t" style="left:819px;top:136px;font-size:11px;line-height:13px;color:#000;">00:0...</div>
<div class="a" style="left:856px;top:81px;width:1px;height:50px;background:#646464"></div>
<div class="a" style="left:857px;top:81px;width:1px;height:50px;background:#fff"></div>
<div class="a" style="left:856px;top:133px;width:1px;height:17px;background:#808080"></div>
<div class="a t" style="left:859px;top:81px;font-size:11px;line-height:12.7px;color:#000;">Out<br>Time</div>
<div class="a t" style="left:859px;top:136px;font-size:11px;line-height:13px;color:#000;">00:0...</div>
<div class="a" style="left:896px;top:81px;width:1px;height:50px;background:#646464"></div>
<div class="a" style="left:897px;top:81px;width:1px;height:50px;background:#fff"></div>
<div class="a" style="left:896px;top:133px;width:1px;height:17px;background:#808080"></div>
<div class="a t" style="left:899px;top:81px;font-size:11px;line-height:12.7px;color:#000;">Out<br>Hold<br>Time</div>
<div class="a t" style="left:899px;top:136px;font-size:11px;line-height:13px;color:#000;">00:0...</div>
<div class="a" style="left:2px;top:157px;width:13px;height:1px;background:#808080"></div>
<div class="a" style="left:2px;top:158px;width:13px;height:1px;background:#fff"></div>
<div class="a" style="left:2px;top:173px;width:13px;height:1px;background:#808080"></div>
<div class="a" style="left:2px;top:174px;width:13px;height:1px;background:#fff"></div>
<div class="a" style="left:2px;top:181px;width:13px;height:1px;background:#808080"></div>
<div class="a" style="left:2px;top:182px;width:13px;height:1px;background:#fff"></div>
<div class="a" style="left:2px;top:236px;width:13px;height:1px;background:#808080"></div>
<div class="a" style="left:2px;top:237px;width:13px;height:1px;background:#fff"></div>
<div class="a" style="left:2px;top:252px;width:13px;height:1px;background:#808080"></div>
<div class="a" style="left:2px;top:253px;width:13px;height:1px;background:#fff"></div>
<div class="a" style="left:19px;top:160px;width:9px;height:9px;background:#fff;border:1px solid #808080;box-sizing:border-box"></div>
<div class="a" style="left:21px;top:164px;width:5px;height:1px;background:#000"></div>
<div class="a" style="left:29px;top:165px;width:4px;height:1px;background:repeating-linear-gradient(90deg,#606060 0 1px,transparent 1px 2px)"></div>
<div class="a" style="left:36px;top:239px;width:9px;height:9px;background:#fff;border:1px solid #808080;box-sizing:border-box"></div>
<div class="a" style="left:38px;top:243px;width:5px;height:1px;background:#000"></div>
<div class="a" style="left:40px;top:241px;width:1px;height:5px;background:#000"></div>
<div class="a" style="left:47px;top:243px;width:1px;height:1px;background:#606060"></div>
<div class="a" style="left:41px;top:174px;width:1px;height:64px;background:repeating-linear-gradient(180deg,#606060 0 1px,transparent 1px 2px)"></div>
<div class="a" style="left:33px;top:157px;width:885px;height:17px;background:#fff"></div>
<div class="a" style="left:33px;top:157px;width:885px;height:1px;background:#808080"></div>
<div class="a" style="left:33px;top:173px;width:885px;height:1px;background:#808080"></div>
<div class="a" style="left:33px;top:157px;width:1px;height:17px;background:#808080"></div>
<div class="a" style="left:34px;top:158px;width:44px;height:15px;background:#d4d0c8"></div>
<div class="a t" style="left:37px;top:160px;font-size:11px;line-height:13px;color:#000;">ACD</div>
<div class="a" style="left:79px;top:158px;width:69px;height:15px;background:#d4d0c8"></div>
<div class="a" style="left:78px;top:157px;width:1px;height:17px;background:#808080"></div>
<div class="a t" style="left:81px;top:160px;font-size:11px;line-height:13px;color:#000;">3300 ICP</div>
<div class="a" style="left:149px;top:158px;width:44px;height:15px;background:#d4d0c8"></div>
<div class="a" style="left:148px;top:157px;width:1px;height:17px;background:#808080"></div>
<div class="a t" style="left:151px;top:160px;font-size:11px;line-height:13px;color:#000;">P300</div>
<div class="a" style="left:194px;top:158px;width:60px;height:15px;background:#d4d0c8"></div>
<div class="a" style="left:193px;top:157px;width:1px;height:17px;background:#808080"></div>
<div class="a t" style="left:196px;top:160px;font-size:11px;line-height:13px;color:#000;">Sales</div>
<div class="a" style="left:253px;top:157px;width:1px;height:17px;background:#808080"></div>
<div class="a t" style="left:171px;width:120px;text-align:right;top:160px;font-size:11px;line-height:13px;color:#000;">0</div>
<div class="a" style="left:293px;top:157px;width:1px;height:17px;background:#808080"></div>
<div class="a t" style="left:296px;top:160px;font-size:11px;line-height:13px;color:#000;">00:00</div>
<div class="a" style="left:343px;top:157px;width:1px;height:17px;background:#808080"></div>
<div class="a t" style="left:261px;width:120px;text-align:right;top:160px;font-size:11px;line-height:13px;color:#000;">0</div>
<div class="a" style="left:383px;top:157px;width:1px;height:17px;background:#808080"></div>
<div class="a t" style="left:301px;width:120px;text-align:right;top:160px;font-size:11px;line-height:13px;color:#000;">0</div>
<div class="a" style="left:423px;top:157px;width:1px;height:17px;background:#808080"></div>
<div class="a t" style="left:341px;width:120px;text-align:right;top:160px;font-size:11px;line-height:13px;color:#000;">0</div>
<div class="a" style="left:463px;top:157px;width:1px;height:17px;background:#808080"></div>
<div class="a t" style="left:381px;width:120px;text-align:right;top:160px;font-size:11px;line-height:13px;color:#000;">0</div>
<div class="a" style="left:503px;top:157px;width:1px;height:17px;background:#808080"></div>
<div class="a t" style="left:421px;width:120px;text-align:right;top:160px;font-size:11px;line-height:13px;color:#000;">0</div>
<div class="a" style="left:543px;top:157px;width:1px;height:17px;background:#808080"></div>
<div class="a t" style="left:461px;width:120px;text-align:right;top:160px;font-size:11px;line-height:13px;color:#000;">0</div>
<div class="a" style="left:583px;top:157px;width:1px;height:17px;background:#808080"></div>
<div class="a t" style="left:501px;width:120px;text-align:right;top:160px;font-size:11px;line-height:13px;color:#000;">0</div>
<div class="a" style="left:623px;top:157px;width:1px;height:17px;background:#808080"></div>
<div class="a t" style="left:541px;width:120px;text-align:right;top:160px;font-size:11px;line-height:13px;color:#000;">0</div>
<div class="a" style="left:663px;top:157px;width:1px;height:17px;background:#808080"></div>
<div class="a t" style="left:581px;width:120px;text-align:right;top:160px;font-size:11px;line-height:13px;color:#000;">0</div>
<div class="a" style="left:703px;top:157px;width:1px;height:17px;background:#808080"></div>
<div class="a t" style="left:621px;width:120px;text-align:right;top:160px;font-size:11px;line-height:13px;color:#000;">0</div>
<div class="a" style="left:743px;top:157px;width:1px;height:17px;background:#808080"></div>
<div class="a t" style="left:661px;width:120px;text-align:right;top:160px;font-size:11px;line-height:13px;color:#000;">?</div>
<div class="a" style="left:783px;top:157px;width:1px;height:17px;background:#808080"></div>
<div class="a t" style="left:701px;width:120px;text-align:right;top:160px;font-size:11px;line-height:13px;color:#000;">0</div>
<div class="a" style="left:823px;top:157px;width:1px;height:17px;background:#808080"></div>
<div class="a t" style="left:826px;top:160px;font-size:11px;line-height:13px;color:#000;">00:00</div>
<div class="a" style="left:863px;top:157px;width:1px;height:17px;background:#808080"></div>
<div class="a t" style="left:866px;top:160px;font-size:11px;line-height:13px;color:#000;">00:00</div>
<div class="a" style="left:903px;top:157px;width:1px;height:17px;background:#808080"></div>
<div class="a t" style="left:906px;top:160px;font-size:11px;line-height:13px;color:#000;">0</div>
<div class="a" style="left:50px;top:181px;width:870px;height:72px;background:#fff"></div>
<div class="a" style="left:50px;top:181px;width:870px;height:55px;background:#d4d0c8"></div>
<div class="a" style="left:50px;top:181px;width:870px;height:1px;background:#808080"></div>
<div class="a" style="left:50px;top:181px;width:1px;height:72px;background:#808080"></div>
<div class="a" style="left:51px;top:182px;width:868px;height:1px;background:#fff"></div>
<div class="a" style="left:51px;top:182px;width:1px;height:54px;background:#fff"></div>
<div class="a" style="left:50px;top:236px;width:870px;height:1px;background:#808080"></div>
<div class="a" style="left:50px;top:252px;width:870px;height:1px;background:#808080"></div>
<div class="a" style="left:52px;top:206px;width:4px;height:1px;background:#000"></div>
<div class="a" style="left:52px;top:208px;width:4px;height:1px;background:#000"></div>
<div class="a" style="left:52px;top:210px;width:4px;height:1px;background:#000"></div>
<div class="a" style="left:52px;top:212px;width:4px;height:1px;background:#000"></div>
<div class="a" style="left:56px;top:184px;width:1px;height:50px;background:#646464"></div>
<div class="a" style="left:57px;top:184px;width:1px;height:50px;background:#fff"></div>
<div class="a t" style="left:60px;top:184px;font-size:11px;line-height:12.7px;color:#000;">Agent group</div>
<div class="a t" style="left:52px;top:239px;font-size:11px;line-height:13px;color:#000;">Sales Group</div>
<div class="a" style="left:136px;top:184px;width:1px;height:50px;background:#646464"></div>
<div class="a" style="left:137px;top:184px;width:1px;height:50px;background:#fff"></div>
<div class="a" style="left:136px;top:236px;width:1px;height:17px;background:#808080"></div>
<div class="a t" style="left:54px;width:120px;text-align:right;top:184px;font-size:11px;line-height:12.7px;color:#000;">DND<br>Cnt</div>
<div class="a t" style="left:54px;width:120px;text-align:right;top:239px;font-size:11px;line-height:13px;color:#000;">0</div>
<div class="a" style="left:176px;top:184px;width:1px;height:50px;background:#646464"></div>
<div class="a" style="left:177px;top:184px;width:1px;height:50px;background:#fff"></div>
<div class="a" style="left:176px;top:236px;width:1px;height:17px;background:#808080"></div>
<div class="a t" style="left:94px;width:120px;text-align:right;top:184px;font-size:11px;line-height:12.7px;color:#000;">MKB<br>Cnt</div>
<div class="a t" style="left:94px;width:120px;text-align:right;top:239px;font-size:11px;line-height:13px;color:#000;">1</div>
<div class="a" style="left:216px;top:184px;width:1px;height:50px;background:#646464"></div>
<div class="a" style="left:217px;top:184px;width:1px;height:50px;background:#fff"></div>
<div class="a" style="left:216px;top:236px;width:1px;height:17px;background:#808080"></div>
<div class="a t" style="left:134px;width:120px;text-align:right;top:184px;font-size:11px;line-height:12.7px;color:#000;">ACD<br>Cnt</div>
<div class="a t" style="left:134px;width:120px;text-align:right;top:239px;font-size:11px;line-height:13px;color:#000;">2</div>
<div class="a" style="left:256px;top:184px;width:1px;height:50px;background:#646464"></div>
<div class="a" style="left:257px;top:184px;width:1px;height:50px;background:#fff"></div>
<div class="a" style="left:256px;top:236px;width:1px;height:17px;background:#808080"></div>
<div class="a t" style="left:174px;width:120px;text-align:right;top:184px;font-size:11px;line-height:12.7px;color:#000;">Shrt<br>ACD<br>Cnt</div>
<div class="a t" style="left:174px;width:120px;text-align:right;top:239px;font-size:11px;line-height:13px;color:#000;">0</div>
<div class="a" style="left:296px;top:184px;width:1px;height:50px;background:#646464"></div>
<div class="a" style="left:297px;top:184px;width:1px;height:50px;background:#fff"></div>
<div class="a" style="left:296px;top:236px;width:1px;height:17px;background:#808080"></div>
<div class="a t" style="left:214px;width:120px;text-align:right;top:184px;font-size:11px;line-height:12.7px;color:#000;">Hold<br>ACD<br>Cnt</div>
<div class="a t" style="left:214px;width:120px;text-align:right;top:239px;font-size:11px;line-height:13px;color:#000;">1</div>
<div class="a" style="left:336px;top:184px;width:1px;height:50px;background:#646464"></div>
<div class="a" style="left:337px;top:184px;width:1px;height:50px;background:#fff"></div>
<div class="a" style="left:336px;top:236px;width:1px;height:17px;background:#808080"></div>
<div class="a t" style="left:254px;width:120px;text-align:right;top:184px;font-size:11px;line-height:12.7px;color:#000;">Non<br>ACD<br>Cnt</div>
<div class="a t" style="left:254px;width:120px;text-align:right;top:239px;font-size:11px;line-height:13px;color:#000;">0</div>
<div class="a" style="left:376px;top:184px;width:1px;height:50px;background:#646464"></div>
<div class="a" style="left:377px;top:184px;width:1px;height:50px;background:#fff"></div>
<div class="a" style="left:376px;top:236px;width:1px;height:17px;background:#808080"></div>
<div class="a t" style="left:294px;width:120px;text-align:right;top:184px;font-size:11px;line-height:12.7px;color:#000;">Hold<br>Non<br>ACD<br>Cnt</div>
<div class="a t" style="left:294px;width:120px;text-align:right;top:239px;font-size:11px;line-height:13px;color:#000;">0</div>
<div class="a" style="left:416px;top:184px;width:1px;height:50px;background:#646464"></div>
<div class="a" style="left:417px;top:184px;width:1px;height:50px;background:#fff"></div>
<div class="a" style="left:416px;top:236px;width:1px;height:17px;background:#808080"></div>
<div class="a t" style="left:334px;width:120px;text-align:right;top:184px;font-size:11px;line-height:12.7px;color:#000;">Out<br>Cnt</div>
<div class="a t" style="left:334px;width:120px;text-align:right;top:239px;font-size:11px;line-height:13px;color:#000;">0</div>
<div class="a" style="left:456px;top:184px;width:1px;height:50px;background:#646464"></div>
<div class="a" style="left:457px;top:184px;width:1px;height:50px;background:#fff"></div>
<div class="a" style="left:456px;top:236px;width:1px;height:17px;background:#808080"></div>
<div class="a t" style="left:374px;width:120px;text-align:right;top:184px;font-size:11px;line-height:12.7px;color:#000;">Out<br>Hold<br>Cnt</div>
<div class="a t" style="left:374px;width:120px;text-align:right;top:239px;font-size:11px;line-height:13px;color:#000;">0</div>
<div class="a" style="left:496px;top:184px;width:1px;height:50px;background:#646464"></div>
<div class="a" style="left:497px;top:184px;width:1px;height:50px;background:#fff"></div>
<div class="a" style="left:496px;top:236px;width:1px;height:17px;background:#808080"></div>
<div class="a t" style="left:414px;width:120px;text-align:right;top:184px;font-size:11px;line-height:12.7px;color:#000;">Avg<br>Hndl</div>
<div class="a t" style="left:414px;width:120px;text-align:right;top:239px;font-size:11px;line-height:13px;color:#000;">1.6</div>
<div class="a" style="left:536px;top:184px;width:1px;height:50px;background:#646464"></div>
<div class="a" style="left:537px;top:184px;width:1px;height:50px;background:#fff"></div>
<div class="a" style="left:536px;top:236px;width:1px;height:17px;background:#808080"></div>
<div class="a t" style="left:539px;top:184px;font-size:11px;line-height:12.7px;color:#000;">Shift<br>Time</div>
<div class="a t" style="left:539px;top:239px;font-size:11px;line-height:13px;color:#000;">01:1...</div>
<div class="a" style="left:576px;top:184px;width:1px;height:50px;background:#646464"></div>
<div class="a" style="left:577px;top:184px;width:1px;height:50px;background:#fff"></div>
<div class="a" style="left:576px;top:236px;width:1px;height:17px;background:#808080"></div>
<div class="a t" style="left:579px;top:184px;font-size:11px;line-height:12.7px;color:#000;">DND<br>Time</div>
<div class="a t" style="left:579px;top:239px;font-size:11px;line-height:13px;color:#000;">00:0...</div>
<div class="a" style="left:616px;top:184px;width:1px;height:50px;background:#646464"></div>
<div class="a" style="left:617px;top:184px;width:1px;height:50px;background:#fff"></div>
<div class="a" style="left:616px;top:236px;width:1px;height:17px;background:#808080"></div>
<div class="a t" style="left:619px;top:184px;font-size:11px;line-height:12.7px;color:#000;">MKB<br>Time</div>
<div class="a t" style="left:619px;top:239px;font-size:11px;line-height:13px;color:#000;">00:0...</div>
<div class="a" style="left:656px;top:184px;width:1px;height:50px;background:#646464"></div>
<div class="a" style="left:657px;top:184px;width:1px;height:50px;background:#fff"></div>
<div class="a" style="left:656px;top:236px;width:1px;height:17px;background:#808080"></div>
<div class="a t" style="left:659px;top:184px;font-size:11px;line-height:12.7px;color:#000;">Wrap<br>Up<br>Time</div>
<div class="a t" style="left:659px;top:239px;font-size:11px;line-height:13px;color:#000;">00:0...</div>
<div class="a" style="left:696px;top:184px;width:1px;height:50px;background:#646464"></div>
<div class="a" style="left:697px;top:184px;width:1px;height:50px;background:#fff"></div>
<div class="a" style="left:696px;top:236px;width:1px;height:17px;background:#808080"></div>
<div class="a t" style="left:699px;top:184px;font-size:11px;line-height:12.7px;color:#000;">ACD<br>Time</div>
<div class="a t" style="left:699px;top:239px;font-size:11px;line-height:13px;color:#000;">00:0...</div>
<div class="a" style="left:736px;top:184px;width:1px;height:50px;background:#646464"></div>
<div class="a" style="left:737px;top:184px;width:1px;height:50px;background:#fff"></div>
<div class="a" style="left:736px;top:236px;width:1px;height:17px;background:#808080"></div>
<div class="a t" style="left:739px;top:184px;font-size:11px;line-height:12.7px;color:#000;">Hold<br>ACD<br>Time</div>
<div class="a t" style="left:739px;top:239px;font-size:11px;line-height:13px;color:#000;">00:0...</div>
<div class="a" style="left:776px;top:184px;width:1px;height:50px;background:#646464"></div>
<div class="a" style="left:777px;top:184px;width:1px;height:50px;background:#fff"></div>
<div class="a" style="left:776px;top:236px;width:1px;height:17px;background:#808080"></div>
<div class="a t" style="left:779px;top:184px;font-size:11px;line-height:12.7px;color:#000;">Non<br>ACD<br>Time</div>
<div class="a t" style="left:779px;top:239px;font-size:11px;line-height:13px;color:#000;">00:0...</div>
<div class="a" style="left:816px;top:184px;width:1px;height:50px;background:#646464"></div>
<div class="a" style="left:817px;top:184px;width:1px;height:50px;background:#fff"></div>
<div class="a" style="left:816px;top:236px;width:1px;height:17px;background:#808080"></div>
<div class="a t" style="left:819px;top:184px;font-size:11px;line-height:12.7px;color:#000;">Hold<br>Non<br>ACD<br>Time</div>
<div class="a t" style="left:819px;top:239px;font-size:11px;line-height:13px;color:#000;">00:0...</div>
<div class="a" style="left:856px;top:184px;width:1px;height:50px;background:#646464"></div>
<div class="a" style="left:857px;top:184px;width:1px;height:50px;background:#fff"></div>
<div class="a" style="left:856px;top:236px;width:1px;height:17px;background:#808080"></div>
<div class="a t" style="left:859px;top:184px;font-size:11px;line-height:12.7px;color:#000;">Out<br>Time</div>
<div class="a t" style="left:859px;top:239px;font-size:11px;line-height:13px;color:#000;">00:0...</div>
<div class="a" style="left:896px;top:184px;width:1px;height:50px;background:#646464"></div>
<div class="a" style="left:897px;top:184px;width:1px;height:50px;background:#fff"></div>
<div class="a" style="left:896px;top:236px;width:1px;height:17px;background:#808080"></div>
<div class="a t" style="left:899px;top:184px;font-size:11px;line-height:12.7px;color:#000;">Out<br>Hold<br>Time</div>
<div class="a t" style="left:899px;top:239px;font-size:11px;line-height:13px;color:#000;">00:0...</div>
<div class="a" style="left:2px;top:260px;width:13px;height:1px;background:#808080"></div>
<div class="a" style="left:2px;top:261px;width:13px;height:1px;background:#fff"></div>
<div class="a" style="left:2px;top:276px;width:13px;height:1px;background:#808080"></div>
<div class="a" style="left:2px;top:277px;width:13px;height:1px;background:#fff"></div>
<div class="a" style="left:2px;top:284px;width:13px;height:1px;background:#808080"></div>
<div class="a" style="left:2px;top:285px;width:13px;height:1px;background:#fff"></div>
<div class="a" style="left:2px;top:339px;width:13px;height:1px;background:#808080"></div>
<div class="a" style="left:2px;top:340px;width:13px;height:1px;background:#fff"></div>
<div class="a" style="left:2px;top:355px;width:13px;height:1px;background:#808080"></div>
<div class="a" style="left:2px;top:356px;width:13px;height:1px;background:#fff"></div>
<div class="a" style="left:19px;top:263px;width:9px;height:9px;background:#fff;border:1px solid #808080;box-sizing:border-box"></div>
<div class="a" style="left:21px;top:267px;width:5px;height:1px;background:#000"></div>
<div class="a" style="left:29px;top:268px;width:4px;height:1px;background:repeating-linear-gradient(90deg,#606060 0 1px,transparent 1px 2px)"></div>
<div class="a" style="left:36px;top:342px;width:9px;height:9px;background:#fff;border:1px solid #808080;box-sizing:border-box"></div>
<div class="a" style="left:38px;top:346px;width:5px;height:1px;background:#000"></div>
<div class="a" style="left:40px;top:344px;width:1px;height:5px;background:#000"></div>
<div class="a" style="left:47px;top:346px;width:1px;height:1px;background:#606060"></div>
<div class="a" style="left:41px;top:277px;width:1px;height:64px;background:repeating-linear-gradient(180deg,#606060 0 1px,transparent 1px 2px)"></div>
<div class="a" style="left:33px;top:260px;width:885px;height:17px;background:#fff"></div>
<div class="a" style="left:33px;top:260px;width:885px;height:1px;background:#808080"></div>
<div class="a" style="left:33px;top:276px;width:885px;height:1px;background:#808080"></div>
<div class="a" style="left:33px;top:260px;width:1px;height:17px;background:#808080"></div>
<div class="a" style="left:34px;top:261px;width:44px;height:15px;background:#d4d0c8"></div>
<div class="a t" style="left:37px;top:263px;font-size:11px;line-height:13px;color:#000;">ACD</div>
<div class="a" style="left:79px;top:261px;width:69px;height:15px;background:#d4d0c8"></div>
<div class="a" style="left:78px;top:260px;width:1px;height:17px;background:#808080"></div>
<div class="a t" style="left:81px;top:263px;font-size:11px;line-height:13px;color:#000;">DocsIgnite</div>
<div class="a" style="left:149px;top:261px;width:44px;height:15px;background:#d4d0c8"></div>
<div class="a" style="left:148px;top:260px;width:1px;height:17px;background:#808080"></div>
<div class="a t" style="left:151px;top:263px;font-size:11px;line-height:13px;color:#000;">300</div>
<div class="a" style="left:194px;top:261px;width:60px;height:15px;background:#d4d0c8"></div>
<div class="a" style="left:193px;top:260px;width:1px;height:17px;background:#808080"></div>
<div class="a t" style="left:196px;top:263px;font-size:11px;line-height:13px;color:#000;">Sales</div>
<div class="a" style="left:253px;top:260px;width:1px;height:17px;background:#808080"></div>
<div class="a t" style="left:171px;width:120px;text-align:right;top:263px;font-size:11px;line-height:13px;color:#000;">0</div>
<div class="a" style="left:293px;top:260px;width:1px;height:17px;background:#808080"></div>
<div class="a t" style="left:296px;top:263px;font-size:11px;line-height:13px;color:#000;">00:00</div>
<div class="a" style="left:343px;top:260px;width:1px;height:17px;background:#808080"></div>
<div class="a t" style="left:261px;width:120px;text-align:right;top:263px;font-size:11px;line-height:13px;color:#000;">1</div>
<div class="a" style="left:383px;top:260px;width:1px;height:17px;background:#808080"></div>
<div class="a t" style="left:301px;width:120px;text-align:right;top:263px;font-size:11px;line-height:13px;color:#000;">0</div>
<div class="a" style="left:423px;top:260px;width:1px;height:17px;background:#808080"></div>
<div class="a t" style="left:341px;width:120px;text-align:right;top:263px;font-size:11px;line-height:13px;color:#000;">1</div>
<div class="a" style="left:463px;top:260px;width:1px;height:17px;background:#808080"></div>
<div class="a t" style="left:381px;width:120px;text-align:right;top:263px;font-size:11px;line-height:13px;color:#000;">0</div>
<div class="a" style="left:503px;top:260px;width:1px;height:17px;background:#808080"></div>
<div class="a t" style="left:421px;width:120px;text-align:right;top:263px;font-size:11px;line-height:13px;color:#000;">0</div>
<div class="a" style="left:543px;top:260px;width:1px;height:17px;background:#808080"></div>
<div class="a t" style="left:461px;width:120px;text-align:right;top:263px;font-size:11px;line-height:13px;color:#000;">1</div>
<div class="a" style="left:583px;top:260px;width:1px;height:17px;background:#808080"></div>
<div class="a t" style="left:501px;width:120px;text-align:right;top:263px;font-size:11px;line-height:13px;color:#000;">0</div>
<div class="a" style="left:623px;top:260px;width:1px;height:17px;background:#808080"></div>
<div class="a t" style="left:541px;width:120px;text-align:right;top:263px;font-size:11px;line-height:13px;color:#000;">0</div>
<div class="a" style="left:663px;top:260px;width:1px;height:17px;background:#808080"></div>
<div class="a t" style="left:581px;width:120px;text-align:right;top:263px;font-size:11px;line-height:13px;color:#000;">0</div>
<div class="a" style="left:703px;top:260px;width:1px;height:17px;background:#808080"></div>
<div class="a t" style="left:621px;width:120px;text-align:right;top:263px;font-size:11px;line-height:13px;color:#000;">0</div>
<div class="a" style="left:743px;top:260px;width:1px;height:17px;background:#808080"></div>
<div class="a t" style="left:661px;width:120px;text-align:right;top:263px;font-size:11px;line-height:13px;color:#000;">?</div>
<div class="a" style="left:783px;top:260px;width:1px;height:17px;background:#808080"></div>
<div class="a t" style="left:701px;width:120px;text-align:right;top:263px;font-size:11px;line-height:13px;color:#000;">0</div>
<div class="a" style="left:823px;top:260px;width:1px;height:17px;background:#808080"></div>
<div class="a t" style="left:826px;top:263px;font-size:11px;line-height:13px;color:#000;">00:00</div>
<div class="a" style="left:863px;top:260px;width:1px;height:17px;background:#808080"></div>
<div class="a t" style="left:866px;top:263px;font-size:11px;line-height:13px;color:#000;">00:00</div>
<div class="a" style="left:903px;top:260px;width:1px;height:17px;background:#808080"></div>
<div class="a t" style="left:906px;top:263px;font-size:11px;line-height:13px;color:#000;">0</div>
<div class="a" style="left:50px;top:284px;width:870px;height:72px;background:#fff"></div>
<div class="a" style="left:50px;top:284px;width:870px;height:55px;background:#d4d0c8"></div>
<div class="a" style="left:50px;top:284px;width:870px;height:1px;background:#808080"></div>
<div class="a" style="left:50px;top:284px;width:1px;height:72px;background:#808080"></div>
<div class="a" style="left:51px;top:285px;width:868px;height:1px;background:#fff"></div>
<div class="a" style="left:51px;top:285px;width:1px;height:54px;background:#fff"></div>
<div class="a" style="left:50px;top:339px;width:870px;height:1px;background:#808080"></div>
<div class="a" style="left:50px;top:355px;width:870px;height:1px;background:#808080"></div>
<div class="a" style="left:52px;top:309px;width:4px;height:1px;background:#000"></div>
<div class="a" style="left:52px;top:311px;width:4px;height:1px;background:#000"></div>
<div class="a" style="left:52px;top:313px;width:4px;height:1px;background:#000"></div>
<div class="a" style="left:52px;top:315px;width:4px;height:1px;background:#000"></div>
<div class="a" style="left:56px;top:287px;width:1px;height:50px;background:#646464"></div>
<div class="a" style="left:57px;top:287px;width:1px;height:50px;background:#fff"></div>
<div class="a t" style="left:60px;top:287px;font-size:11px;line-height:12.7px;color:#000;">Agent group</div>
<div class="a t" style="left:52px;top:342px;font-size:11px;line-height:13px;color:#000;">Sales Group</div>
<div class="a" style="left:136px;top:287px;width:1px;height:50px;background:#646464"></div>
<div class="a" style="left:137px;top:287px;width:1px;height:50px;background:#fff"></div>
<div class="a" style="left:136px;top:339px;width:1px;height:17px;background:#808080"></div>
<div class="a t" style="left:54px;width:120px;text-align:right;top:287px;font-size:11px;line-height:12.7px;color:#000;">DND<br>Cnt</div>
<div class="a t" style="left:54px;width:120px;text-align:right;top:342px;font-size:11px;line-height:13px;color:#000;">0</div>
<div class="a" style="left:176px;top:287px;width:1px;height:50px;background:#646464"></div>
<div class="a" style="left:177px;top:287px;width:1px;height:50px;background:#fff"></div>
<div class="a" style="left:176px;top:339px;width:1px;height:17px;background:#808080"></div>
<div class="a t" style="left:94px;width:120px;text-align:right;top:287px;font-size:11px;line-height:12.7px;color:#000;">MKB<br>Cnt</div>
<div class="a t" style="left:94px;width:120px;text-align:right;top:342px;font-size:11px;line-height:13px;color:#000;">1</div>
<div class="a" style="left:216px;top:287px;width:1px;height:50px;background:#646464"></div>
<div class="a" style="left:217px;top:287px;width:1px;height:50px;background:#fff"></div>
<div class="a" style="left:216px;top:339px;width:1px;height:17px;background:#808080"></div>
<div class="a t" style="left:134px;width:120px;text-align:right;top:287px;font-size:11px;line-height:12.7px;color:#000;">ACD<br>Cnt</div>
<div class="a t" style="left:134px;width:120px;text-align:right;top:342px;font-size:11px;line-height:13px;color:#000;">2</div>
<div class="a" style="left:256px;top:287px;width:1px;height:50px;background:#646464"></div>
<div class="a" style="left:257px;top:287px;width:1px;height:50px;background:#fff"></div>
<div class="a" style="left:256px;top:339px;width:1px;height:17px;background:#808080"></div>
<div class="a t" style="left:174px;width:120px;text-align:right;top:287px;font-size:11px;line-height:12.7px;color:#000;">Shrt<br>ACD<br>Cnt</div>
<div class="a t" style="left:174px;width:120px;text-align:right;top:342px;font-size:11px;line-height:13px;color:#000;">0</div>
<div class="a" style="left:296px;top:287px;width:1px;height:50px;background:#646464"></div>
<div class="a" style="left:297px;top:287px;width:1px;height:50px;background:#fff"></div>
<div class="a" style="left:296px;top:339px;width:1px;height:17px;background:#808080"></div>
<div class="a t" style="left:214px;width:120px;text-align:right;top:287px;font-size:11px;line-height:12.7px;color:#000;">Hold<br>ACD<br>Cnt</div>
<div class="a t" style="left:214px;width:120px;text-align:right;top:342px;font-size:11px;line-height:13px;color:#000;">1</div>
<div class="a" style="left:336px;top:287px;width:1px;height:50px;background:#646464"></div>
<div class="a" style="left:337px;top:287px;width:1px;height:50px;background:#fff"></div>
<div class="a" style="left:336px;top:339px;width:1px;height:17px;background:#808080"></div>
<div class="a t" style="left:254px;width:120px;text-align:right;top:287px;font-size:11px;line-height:12.7px;color:#000;">Non<br>ACD<br>Cnt</div>
<div class="a t" style="left:254px;width:120px;text-align:right;top:342px;font-size:11px;line-height:13px;color:#000;">0</div>
<div class="a" style="left:376px;top:287px;width:1px;height:50px;background:#646464"></div>
<div class="a" style="left:377px;top:287px;width:1px;height:50px;background:#fff"></div>
<div class="a" style="left:376px;top:339px;width:1px;height:17px;background:#808080"></div>
<div class="a t" style="left:294px;width:120px;text-align:right;top:287px;font-size:11px;line-height:12.7px;color:#000;">Hold<br>Non<br>ACD<br>Cnt</div>
<div class="a t" style="left:294px;width:120px;text-align:right;top:342px;font-size:11px;line-height:13px;color:#000;">0</div>
<div class="a" style="left:416px;top:287px;width:1px;height:50px;background:#646464"></div>
<div class="a" style="left:417px;top:287px;width:1px;height:50px;background:#fff"></div>
<div class="a" style="left:416px;top:339px;width:1px;height:17px;background:#808080"></div>
<div class="a t" style="left:334px;width:120px;text-align:right;top:287px;font-size:11px;line-height:12.7px;color:#000;">Out<br>Cnt</div>
<div class="a t" style="left:334px;width:120px;text-align:right;top:342px;font-size:11px;line-height:13px;color:#000;">0</div>
<div class="a" style="left:456px;top:287px;width:1px;height:50px;background:#646464"></div>
<div class="a" style="left:457px;top:287px;width:1px;height:50px;background:#fff"></div>
<div class="a" style="left:456px;top:339px;width:1px;height:17px;background:#808080"></div>
<div class="a t" style="left:374px;width:120px;text-align:right;top:287px;font-size:11px;line-height:12.7px;color:#000;">Out<br>Hold<br>Cnt</div>
<div class="a t" style="left:374px;width:120px;text-align:right;top:342px;font-size:11px;line-height:13px;color:#000;">0</div>
<div class="a" style="left:496px;top:287px;width:1px;height:50px;background:#646464"></div>
<div class="a" style="left:497px;top:287px;width:1px;height:50px;background:#fff"></div>
<div class="a" style="left:496px;top:339px;width:1px;height:17px;background:#808080"></div>
<div class="a t" style="left:414px;width:120px;text-align:right;top:287px;font-size:11px;line-height:12.7px;color:#000;">Avg<br>Hndl</div>
<div class="a t" style="left:414px;width:120px;text-align:right;top:342px;font-size:11px;line-height:13px;color:#000;">1.6</div>
<div class="a" style="left:536px;top:287px;width:1px;height:50px;background:#646464"></div>
<div class="a" style="left:537px;top:287px;width:1px;height:50px;background:#fff"></div>
<div class="a" style="left:536px;top:339px;width:1px;height:17px;background:#808080"></div>
<div class="a t" style="left:539px;top:287px;font-size:11px;line-height:12.7px;color:#000;">Shift<br>Time</div>
<div class="a t" style="left:539px;top:342px;font-size:11px;line-height:13px;color:#000;">01:1...</div>
<div class="a" style="left:576px;top:287px;width:1px;height:50px;background:#646464"></div>
<div class="a" style="left:577px;top:287px;width:1px;height:50px;background:#fff"></div>
<div class="a" style="left:576px;top:339px;width:1px;height:17px;background:#808080"></div>
<div class="a t" style="left:579px;top:287px;font-size:11px;line-height:12.7px;color:#000;">DND<br>Time</div>
<div class="a t" style="left:579px;top:342px;font-size:11px;line-height:13px;color:#000;">00:0...</div>
<div class="a" style="left:616px;top:287px;width:1px;height:50px;background:#646464"></div>
<div class="a" style="left:617px;top:287px;width:1px;height:50px;background:#fff"></div>
<div class="a" style="left:616px;top:339px;width:1px;height:17px;background:#808080"></div>
<div class="a t" style="left:619px;top:287px;font-size:11px;line-height:12.7px;color:#000;">MKB<br>Time</div>
<div class="a t" style="left:619px;top:342px;font-size:11px;line-height:13px;color:#000;">00:0...</div>
<div class="a" style="left:656px;top:287px;width:1px;height:50px;background:#646464"></div>
<div class="a" style="left:657px;top:287px;width:1px;height:50px;background:#fff"></div>
<div class="a" style="left:656px;top:339px;width:1px;height:17px;background:#808080"></div>
<div class="a t" style="left:659px;top:287px;font-size:11px;line-height:12.7px;color:#000;">Wrap<br>Up<br>Time</div>
<div class="a t" style="left:659px;top:342px;font-size:11px;line-height:13px;color:#000;">00:0...</div>
<div class="a" style="left:696px;top:287px;width:1px;height:50px;background:#646464"></div>
<div class="a" style="left:697px;top:287px;width:1px;height:50px;background:#fff"></div>
<div class="a" style="left:696px;top:339px;width:1px;height:17px;background:#808080"></div>
<div class="a t" style="left:699px;top:287px;font-size:11px;line-height:12.7px;color:#000;">ACD<br>Time</div>
<div class="a t" style="left:699px;top:342px;font-size:11px;line-height:13px;color:#000;">00:0...</div>
<div class="a" style="left:736px;top:287px;width:1px;height:50px;background:#646464"></div>
<div class="a" style="left:737px;top:287px;width:1px;height:50px;background:#fff"></div>
<div class="a" style="left:736px;top:339px;width:1px;height:17px;background:#808080"></div>
<div class="a t" style="left:739px;top:287px;font-size:11px;line-height:12.7px;color:#000;">Hold<br>ACD<br>Time</div>
<div class="a t" style="left:739px;top:342px;font-size:11px;line-height:13px;color:#000;">00:0...</div>
<div class="a" style="left:776px;top:287px;width:1px;height:50px;background:#646464"></div>
<div class="a" style="left:777px;top:287px;width:1px;height:50px;background:#fff"></div>
<div class="a" style="left:776px;top:339px;width:1px;height:17px;background:#808080"></div>
<div class="a t" style="left:779px;top:287px;font-size:11px;line-height:12.7px;color:#000;">Non<br>ACD<br>Time</div>
<div class="a t" style="left:779px;top:342px;font-size:11px;line-height:13px;color:#000;">00:0...</div>
<div class="a" style="left:816px;top:287px;width:1px;height:50px;background:#646464"></div>
<div class="a" style="left:817px;top:287px;width:1px;height:50px;background:#fff"></div>
<div class="a" style="left:816px;top:339px;width:1px;height:17px;background:#808080"></div>
<div class="a t" style="left:819px;top:287px;font-size:11px;line-height:12.7px;color:#000;">Hold<br>Non<br>ACD<br>Time</div>
<div class="a t" style="left:819px;top:342px;font-size:11px;line-height:13px;color:#000;">00:0...</div>
<div class="a" style="left:856px;top:287px;width:1px;height:50px;background:#646464"></div>
<div class="a" style="left:857px;top:287px;width:1px;height:50px;background:#fff"></div>
<div class="a" style="left:856px;top:339px;width:1px;height:17px;background:#808080"></div>
<div class="a t" style="left:859px;top:287px;font-size:11px;line-height:12.7px;color:#000;">Out<br>Time</div>
<div class="a t" style="left:859px;top:342px;font-size:11px;line-height:13px;color:#000;">00:0...</div>
<div class="a" style="left:896px;top:287px;width:1px;height:50px;background:#646464"></div>
<div class="a" style="left:897px;top:287px;width:1px;height:50px;background:#fff"></div>
<div class="a" style="left:896px;top:339px;width:1px;height:17px;background:#808080"></div>
<div class="a t" style="left:899px;top:287px;font-size:11px;line-height:12.7px;color:#000;">Out<br>Hold<br>Time</div>
<div class="a t" style="left:899px;top:342px;font-size:11px;line-height:13px;color:#000;">00:0...</div>
</div>
<div class="a" style="left:929px;top:183px;width:16px;height:362px;background:#ededec"></div>
<div class="a" style="left:929px;top:183px;width:16px;height:16px;background:#d4d0c8;box-shadow:inset -1px -1px #404040, inset 1px 1px #fff, inset -2px -2px #808080"><svg class="a" style="left:4px;top:5px" width="8" height="5"><path d="M0 4 L3.5 0 L7 4 Z" fill="#000"/></svg></div>
<div class="a" style="left:929px;top:199px;width:16px;height:307px;background:#d4d0c8;box-shadow:inset -1px -1px #404040, inset 1px 1px #fff, inset -2px -2px #808080"></div>
<div class="a" style="left:929px;top:529px;width:16px;height:16px;background:#d4d0c8;box-shadow:inset -1px -1px #404040, inset 1px 1px #fff, inset -2px -2px #808080"><svg class="a" style="left:4px;top:6px" width="8" height="5"><path d="M0 0 L7 0 L3.5 4 Z" fill="#000"/></svg></div>
<div class="a" style="left:12px;top:545px;width:917px;height:20px;background:#ededec"></div>
<div class="a" style="left:12px;top:545px;width:16px;height:20px;background:#d4d0c8;box-shadow:inset -1px -1px #404040, inset 1px 1px #fff, inset -2px -2px #808080"><svg class="a" style="left:5px;top:5px" width="5" height="9"><path d="M4 0 L0 4.5 L4 9 Z" fill="#000"/></svg></div>
<div class="a" style="left:28px;top:545px;width:743px;height:20px;background:#d4d0c8;box-shadow:inset -1px -1px #404040, inset 1px 1px #fff, inset -2px -2px #808080"></div>
<div class="a" style="left:913px;top:545px;width:16px;height:20px;background:#d4d0c8;box-shadow:inset -1px -1px #404040, inset 1px 1px #fff, inset -2px -2px #808080"><svg class="a" style="left:6px;top:5px" width="5" height="9"><path d="M0 0 L4 4.5 L0 9 Z" fill="#000"/></svg></div>
<div class="a" style="left:929px;top:545px;width:16px;height:20px;background:#d4d0c8"></div>
</body></html>
